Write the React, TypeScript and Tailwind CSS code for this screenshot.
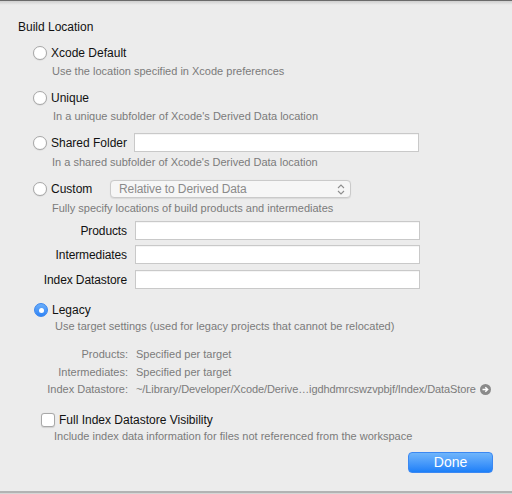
import type { ReactNode } from "react";

function Radio({ checked = false }: { checked?: boolean }) {
  if (checked) {
    return (
      <span className="flex h-[14px] w-[14px] shrink-0 items-center justify-center rounded-full border border-[#3a86ee] bg-gradient-to-b from-[#6aaefa] to-[#2f84f6]">
        <span className="h-[5px] w-[5px] rounded-full bg-white" />
      </span>
    );
  }
  return (
    <span className="h-[14px] w-[14px] shrink-0 rounded-full border border-[#a8a8a8] bg-white shadow-[0_0.5px_1px_rgba(0,0,0,0.12)]" />
  );
}

function TextField({ className = "" }: { className?: string }) {
  return (
    <div
      className={`h-[19px] w-[285px] border border-[#c9c9c9] bg-white shadow-[inset_0_1px_0_rgba(0,0,0,0.04)] ${className}`}
    />
  );
}

function Desc({ children, className = "" }: { children: ReactNode; className?: string }) {
  return (
    <div className={`flex h-[14px] items-center text-[11px] text-[#7b7b7b] ${className}`}>
      {children}
    </div>
  );
}

function FieldRow({ label, className = "" }: { label: string; className?: string }) {
  return (
    <div className={`flex h-[19px] items-center ${className}`}>
      <span className="w-[110px] pr-[1px] text-right text-[12px] tracking-[-0.1px] text-[#111]">
        {label}
      </span>
      <TextField className="ml-[7px]" />
    </div>
  );
}

function InfoRow({
  label,
  children,
  className = "",
}: {
  label: string;
  children: ReactNode;
  className?: string;
}) {
  return (
    <div className={`flex h-[14px] items-center text-[11px] text-[#7b7b7b] ${className}`}>
      <span className="w-[110px] text-right">{label}</span>
      <span className="ml-[8px] flex items-center whitespace-nowrap">{children}</span>
    </div>
  );
}

function PopupChevron() {
  return (
    <svg width="8" height="11" viewBox="0 0 8 11" fill="none">
      <path d="M1 4 L4 1 L7 4" stroke="#8e8e8e" strokeWidth="1.1" />
      <path d="M1 7 L4 10 L7 7" stroke="#8e8e8e" strokeWidth="1.1" />
    </svg>
  );
}

function RevealArrow() {
  return (
    <svg width="11" height="11" viewBox="0 0 11 11" className="ml-[4px]">
      <circle cx="5.5" cy="5.5" r="5.5" fill="#8a8a8a" />
      <path d="M2.5 5.5 H7.5 M5.3 3.2 L7.7 5.5 L5.3 7.8" stroke="#fff" strokeWidth="1.4" fill="none" />
    </svg>
  );
}

export default function App() {
  return (
    <div
      className="flex h-[494px] w-[512px] flex-col overflow-hidden bg-[#ececec] text-[#111]"
      style={{ fontFamily: '"Liberation Sans", Arial, sans-serif' }}
    >
      {/* sheet top edge */}
      <div className="h-[1px] shrink-0 bg-[#6b6b6b]" />
      <div className="h-[4px] shrink-0 bg-gradient-to-b from-[#cfcfcf] to-[#ececec]" />

      <div className="flex flex-1 flex-col pl-[18px]">
        <div className="mt-[14px] flex h-[16px] items-center text-[12px]">Build Location</div>

        {/* Xcode Default */}
        <div className="mt-[8px] flex h-[20px] items-center pl-[15px]">
          <Radio />
          <span className="ml-[4px] text-[12px]">Xcode Default</span>
        </div>
        <Desc className="mt-[1px] pl-[34px]">Use the location specified in Xcode preferences</Desc>

        {/* Unique */}
        <div className="mt-[10px] flex h-[20px] items-center pl-[15px]">
          <Radio />
          <span className="ml-[4px] text-[12px]">Unique</span>
        </div>
        <Desc className="mt-[1px] pl-[35px]">In a unique subfolder of Xcode's Derived Data location</Desc>

        {/* Shared Folder */}
        <div className="mt-[10px] flex h-[19px] items-center pl-[15px]">
          <Radio />
          <span className="ml-[4px] w-[83px] text-[12px]">Shared Folder</span>
          <TextField />
        </div>
        <Desc className="mt-[3px] pl-[34px]">In a shared subfolder of Xcode's Derived Data location</Desc>

        {/* Custom */}
        <div className="mt-[10px] flex h-[20px] items-center pl-[15px]">
          <Radio />
          <span className="ml-[4px] w-[59px] text-[12px]">Custom</span>
          <div className="flex h-[18px] w-[241px] items-center justify-between rounded-[4px] border border-[#cacaca] bg-[#f6f6f6] pl-[8px] pr-[5px] shadow-[0_0.5px_1px_rgba(0,0,0,0.08)]">
            <span className="text-[12px] tracking-[-0.1px] text-[#8a8a8a]">Relative to Derived Data</span>
            <PopupChevron />
          </div>
        </div>
        <Desc className="mt-[2px] pl-[34px]">Fully specify locations of build products and intermediates</Desc>

        <FieldRow label="Products" className="mt-[6px]" />
        <FieldRow label="Intermediates" className="mt-[5px]" />
        <FieldRow label="Index Datastore" className="mt-[6px]" />

        {/* Legacy */}
        <div className="mt-[12px] flex h-[18px] items-center pl-[16px]">
          <Radio checked />
          <span className="ml-[4px] text-[12px]">Legacy</span>
        </div>
        <Desc className="pl-[37px]">Use target settings (used for legacy projects that cannot be relocated)</Desc>

        <InfoRow label="Products:" className="mt-[14px]">
          Specified per target
        </InfoRow>
        <InfoRow label="Intermediates:" className="mt-[4px]">
          Specified per target
        </InfoRow>
        <InfoRow label="Index Datastore:" className="mt-[3px]">
          <span className="tracking-[-0.1px]">
            ~/Library/Developer/Xcode/Derive…igdhdmrcswzvpbjf/Index/DataStore
          </span>
          <RevealArrow />
        </InfoRow>

        {/* Full Index Datastore Visibility */}
        <div className="mt-[16px] flex h-[16px] items-center pl-[23px]">
          <span className="h-[14px] w-[14px] shrink-0 rounded-[3px] border border-[#a8a8a8] bg-white shadow-[0_0.5px_1px_rgba(0,0,0,0.12)]" />
          <span className="ml-[4px] text-[12px]">Full Index Datastore Visibility</span>
        </div>
        <Desc className="mt-[1px] pl-[36px]">Include index data information for files not referenced from the workspace</Desc>

        <div className="mt-[9px] flex justify-end pr-[19px]">
          <button className="flex h-[21px] w-[85px] items-center justify-center rounded-[4px] border border-[#3b88f2] bg-gradient-to-b from-[#6fb5fb] to-[#1b7ff8] text-[14px] text-white">
            Done
          </button>
        </div>
      </div>

      {/* sheet bottom edge */}
      <div className="h-[2px] shrink-0 bg-[#b3b3b3]" />
      <div className="h-[1px] shrink-0 bg-[#d6d6d6]" />
    </div>
  );
}
